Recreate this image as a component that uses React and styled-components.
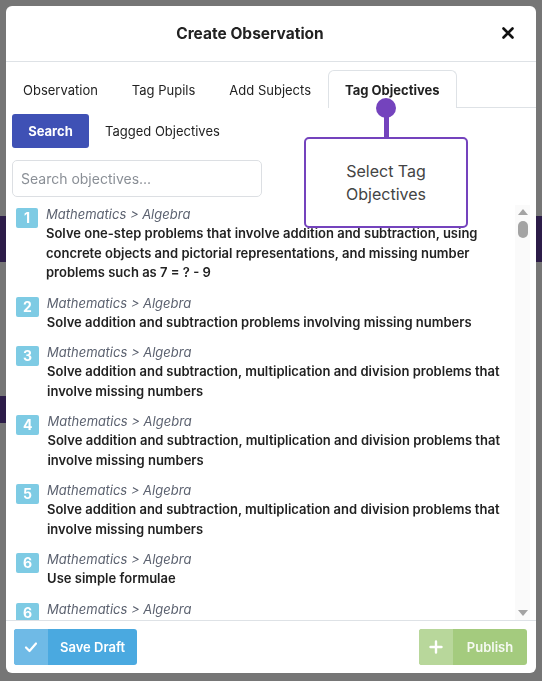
import styled, { createGlobalStyle } from 'styled-components'

const GlobalStyle = createGlobalStyle`
   html, body {
      margin: 0;
      padding: 0;
      height: 100%;
   }
   body {
      font-family: Inter, 'Noto Sans', sans-serif;
      background: #767676;
      overflow: hidden;
   }
`

// page behind the dimmed overlay (only the edges peek out)
const Backdrop = styled.div`
   position: fixed;
   inset: 0;
   z-index: 0;
   background:
      linear-gradient(#2c1c48, #2c1c48) 0 216px / 100% 46px no-repeat,
      linear-gradient(#2c1c48, #2c1c48) 0 396px / 6px 27px no-repeat,
      #767676;
`

const Modal = styled.div`
   position: relative;
   z-index: 1;
   margin: 6px;
   width: 530px;
   height: 667px;
   background: #fff;
   border-radius: 6px;
   display: flex;
   flex-direction: column;
   overflow: hidden;
`

const Header = styled.div`
   height: 55px;
   flex: none;
   border-bottom: 1px solid #dee2e6;
   display: flex;
   align-items: center;
`

const Title = styled.h2`
   flex: 1;
   margin: 0;
   text-align: center;
   font-size: 15.5px;
   font-weight: 700;
   color: #222;
`

const CloseButton = styled.button`
   flex: none;
   width: 42px;
   height: 20px;
   padding: 0 22px 0 0;
   margin-top: -1px;
   border: none;
   background: none;
   display: flex;
   align-items: center;
   justify-content: flex-end;
`

const Tabs = styled.div`
   flex: none;
   display: flex;
   align-items: flex-end;
   height: 45px;
   border-bottom: 1px solid #dee2e6;
`

const Tab = styled.div`
   height: 37px;
   padding: 0 16px;
   display: flex;
   align-items: center;
   font-size: 13px;
   color: #222;
   font-weight: ${(props) => (props.active ? 700 : 400)};
   border: 1px solid ${(props) => (props.active ? '#dee2e6' : 'transparent')};
   border-bottom: none;
   border-radius: 6px 6px 0 0;
   background: #fff;
   margin-bottom: -1px;
`

const Body = styled.div`
   flex: 1;
   min-height: 0;
   padding: 6px 6px 0;
   display: flex;
   flex-direction: column;
`

const SubTabs = styled.div`
   display: flex;
   align-items: center;
   gap: 16px;
`

const SearchButton = styled.button`
   height: 34px;
   width: 77px;
   border: none;
   border-radius: 3px;
   background: #3f51b5;
   color: #fff;
   font-family: inherit;
   font-size: 13px;
   font-weight: 700;
`

const SubTabLabel = styled.span`
   font-size: 13px;
   color: #222;
`

const SearchInput = styled.input`
   margin-top: 12px;
   width: 250px;
   height: 37px;
   box-sizing: border-box;
   border: 1px solid #dcdfe3;
   border-radius: 5px;
   padding: 0 8px;
   font-family: inherit;
   font-size: 14px;
   color: #222;
   outline: none;
   &::placeholder {
      color: #8a8f96;
   }
`

const ListArea = styled.div`
   margin-top: 7px;
   flex: 1;
   min-height: 0;
   display: flex;
`

const List = styled.div`
   flex: 1;
   min-width: 0;
   overflow: hidden;
   padding: 0 4px 0 4px;
`

// drawn scrollbar beside the list
const ScrollTrack = styled.div`
   flex: none;
   width: 15px;
   margin-top: 1px;
   background: #fafafa;
   display: flex;
   flex-direction: column;
   align-items: center;
   padding: 4px 0;
   box-sizing: border-box;
`

const Arrow = styled.span`
   flex: none;
   width: 0;
   height: 0;
   border-left: 5px solid transparent;
   border-right: 5px solid transparent;
   border-${(props) => (props.down ? 'top' : 'bottom')}: 6px solid #a3a3a3;
   margin-top: ${(props) => (props.down ? 'auto' : '0')};
`

const Thumb = styled.span`
   flex: none;
   width: 10px;
   height: 17px;
   border-radius: 5px;
   background: #a3a3a3;
   margin-top: 6px;
`

const Item = styled.div`
   display: flex;
   gap: 8px;
   margin-bottom: 10px;
`

const Badge = styled.span`
   flex: none;
   margin-top: 4px;
   height: 20px;
   min-width: 8px;
   padding: 0 7px;
   border-radius: 2px;
   background: #7ecbe4;
   color: #fff;
   font-size: 14px;
   font-weight: 700;
   line-height: 20px;
   text-align: center;
`

const ItemText = styled.div`
   display: flex;
   flex-direction: column;
`

const Category = styled.span`
   font-size: 13px;
   font-style: italic;
   line-height: 20px;
   color: #5c6270;
`

const Objective = styled.span`
   font-size: 13px;
   font-weight: 600;
   line-height: 19.5px;
   color: #222;
`

const Footer = styled.div`
   flex: none;
   border-top: 1px solid #dee2e6;
   padding: 8px 9px 8px 8px;
   display: flex;
   justify-content: space-between;
`

const ActionButton = styled.button`
   display: flex;
   height: 36px;
   padding: 0;
   border: none;
   border-radius: 3px;
   overflow: hidden;
   background: ${(props) => props.color};
   color: #fff;
   font-family: inherit;
   font-size: 13px;
   font-weight: 600;
   width: ${(props) => props.width}px;
`

const ButtonIcon = styled.span`
   width: 34px;
   flex: none;
   display: flex;
   align-items: center;
   justify-content: center;
   background: ${(props) => props.color};
`

const ButtonLabel = styled.span`
   flex: 1;
   display: flex;
   align-items: center;
   justify-content: center;
   color: ${(props) => (props.faded ? 'rgba(255,255,255,0.9)' : '#fff')};
`

// guided tour tooltip over the tabs
const Tour = styled.div`
   position: absolute;
   left: 298px;
   top: 92px;
   width: 164px;
   display: flex;
   flex-direction: column;
   align-items: center;
   z-index: 2;
`

const TourDot = styled.span`
   width: 20px;
   height: 20px;
   border-radius: 50%;
   background: #7443bd;
`

const TourStem = styled.span`
   width: 5px;
   height: 22px;
   margin-top: -3px;
   background: #7443bd;
`

const TourBox = styled.div`
   width: 100%;
   height: 91px;
   box-sizing: border-box;
   border: 2px solid #7443bd;
   border-radius: 5px;
   background: #fff;
   display: flex;
   align-items: center;
   justify-content: center;
   text-align: center;
   font-size: 16px;
   line-height: 23px;
   color: #444;
   padding: 0 30px;
`

const objectives = [
   'Solve one-step problems that involve addition and subtraction, using concrete objects and pictorial representations, and missing number problems such as 7 = ? - 9',
   'Solve addition and subtraction problems involving missing numbers',
   'Solve addition and subtraction, multiplication and division problems that involve missing numbers',
   'Solve addition and subtraction, multiplication and division problems that involve missing numbers',
   'Solve addition and subtraction, multiplication and division problems that involve missing numbers',
   'Use simple formulae',
   'Use simple formulae',
   'Generate and describe linear number sequences',
   'Express missing number problems algebraically',
]

const items = objectives.map((text, i) => ({ num: i < 6 ? i + 1 : i, text }))

function App() {
   return (
      <>
         <GlobalStyle />
         <Backdrop />
         <Modal>
            <Header>
               <Title>Create Observation</Title>
               <CloseButton aria-label="Close">
                  <svg width="12" height="12" viewBox="0 0 12 12">
                     <path d="M1.5 1.5 L10.5 10.5 M10.5 1.5 L1.5 10.5" stroke="#111" strokeWidth="2.6" strokeLinecap="round" />
                  </svg>
               </CloseButton>
            </Header>
            <Tabs>
               <Tab>Observation</Tab>
               <Tab>Tag Pupils</Tab>
               <Tab>Add Subjects</Tab>
               <Tab active>Tag Objectives</Tab>
            </Tabs>
            <Body>
               <SubTabs>
                  <SearchButton>Search</SearchButton>
                  <SubTabLabel>Tagged Objectives</SubTabLabel>
               </SubTabs>
               <SearchInput placeholder="Search objectives..." />
               <ListArea>
                  <List>
                     {items.map((item, i) => (
                        <Item key={i}>
                           <Badge>{item.num}</Badge>
                           <ItemText>
                              <Category>Mathematics &gt; Algebra</Category>
                              <Objective>{item.text}</Objective>
                           </ItemText>
                        </Item>
                     ))}
                  </List>
                  <ScrollTrack>
                     <Arrow />
                     <Thumb />
                     <Arrow down />
                  </ScrollTrack>
               </ListArea>
            </Body>
            <Footer>
               <ActionButton color="#4aa9e0" width={123}>
                  <ButtonIcon color="#6fbae6">
                     <svg width="14" height="14" viewBox="0 0 14 14">
                        <path d="M2 7.5 L5.5 11 L12 3.5" fill="none" stroke="#fff" strokeWidth="2.2" strokeLinecap="round" strokeLinejoin="round" />
                     </svg>
                  </ButtonIcon>
                  <ButtonLabel>Save Draft</ButtonLabel>
               </ActionButton>
               <ActionButton color="#a4cb7e" width={108}>
                  <ButtonIcon color="#b8d79b">
                     <svg width="14" height="14" viewBox="0 0 14 14">
                        <path d="M7 1.5 V12.5 M1.5 7 H12.5" stroke="#fff" strokeWidth="2.4" strokeLinecap="round" />
                     </svg>
                  </ButtonIcon>
                  <ButtonLabel faded>Publish</ButtonLabel>
               </ActionButton>
            </Footer>
            <Tour>
               <TourDot />
               <TourStem />
               <TourBox>Select Tag Objectives</TourBox>
            </Tour>
         </Modal>
      </>
   )
}

export default App
